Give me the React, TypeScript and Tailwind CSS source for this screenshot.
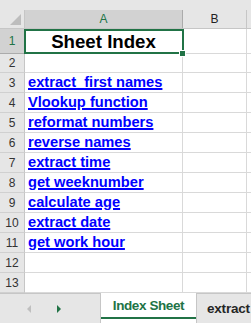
import React from "react";

const rows = [
  { n: 1, h: "h-[25px]" },
  { n: 2, h: "h-[19px]" },
  { n: 3, h: "h-[20px]", link: "extract\u00a0 first names" },
  { n: 4, h: "h-[20px]", link: "Vlookup function" },
  { n: 5, h: "h-[20px]", link: "reformat numbers" },
  { n: 6, h: "h-[20px]", link: "reverse names" },
  { n: 7, h: "h-[20px]", link: "extract time" },
  { n: 8, h: "h-[20px]", link: "get weeknumber" },
  { n: 9, h: "h-[20px]", link: "calculate age" },
  { n: 10, h: "h-[20px]", link: "extract date" },
  { n: 11, h: "h-[20px]", link: "get work hour" },
  { n: 12, h: "h-[20px]" },
  { n: 13, h: "h-[20px]" },
];

export default function App() {
  return (
    <div className="relative w-[251px] h-[323px] overflow-hidden bg-white flex flex-col font-['Liberation_Sans',Arial,sans-serif]">
      <div className="h-[10px] bg-[#e6e6e6] shrink-0" />

      {/* column headers */}
      <div className="flex h-[19px] shrink-0 bg-[#e6e6e6] border-b border-[#c6c6c6]">
        <div className="relative w-[25px] border-r border-[#c6c6c6]">
          <svg className="absolute right-[3px] bottom-[3px]" width="11" height="11" viewBox="0 0 11 11">
            <polygon points="11,0 11,11 0,11" fill="#bdbdbd" />
          </svg>
        </div>
        <div className="w-[158px] flex items-center justify-center bg-[#d2d2d2] border-r border-[#ababab] text-[12px] text-[#217346]">
          A
        </div>
        <div className="w-[64px] flex items-center justify-center border-r border-[#c6c6c6] text-[12px] text-[#222]">
          B
        </div>
        <div className="flex-1" />
      </div>

      {/* grid */}
      {rows.map((r) => (
        <div key={r.n} className={`flex shrink-0 ${r.h}`}>
          <div
            className={`w-[25px] flex items-center justify-center border-r border-b border-r-[#c6c6c6] text-[12px] ${
              r.n === 1
                ? "bg-[#d2d2d2] border-b-[#ababab] text-[#217346]"
                : "bg-[#e6e6e6] border-b-[#d0d0d0] text-[#333]"
            }`}
          >
            {r.n}
          </div>
          <div className="w-[158px] flex items-end border-r border-b border-[#d9d9d9] overflow-visible whitespace-nowrap">
            {r.n === 1 && (
              <div className="w-full text-center text-[18.67px] leading-[22px] font-bold text-black">
                Sheet Index
              </div>
            )}
            {r.link && (
              <a
                href="#"
                className="pl-[3px] pb-[2px] text-[14.67px] leading-[16px] font-bold text-[#0000ff] underline decoration-2 underline-offset-[1px]"
              >
                {r.link}
              </a>
            )}
          </div>
          <div className="w-[64px] border-r border-b border-[#d9d9d9]" />
          <div className="flex-1 border-b border-[#d9d9d9]" />
        </div>
      ))}

      {/* selection on A1 */}
      <div className="absolute left-[24px] top-[29px] w-[160px] h-[25px] border-2 border-[#217346]" />
      <div className="absolute left-[179px] top-[50px] w-[7px] h-[7px] bg-[#217346] border border-white" />

      {/* sheet tabs */}
      <div className="flex h-[30px] shrink-0 bg-[#e6e6e6] border-t border-[#c6c6c6]">
        <div className="w-[100px] flex items-center">
          <svg className="ml-[27px]" width="5" height="8" viewBox="0 0 5 8">
            <polygon points="4,0 4,8 0,4" fill="#bfbfbf" />
          </svg>
          <svg className="ml-[25px]" width="5" height="8" viewBox="0 0 5 8">
            <polygon points="0,0 0,8 4,4" fill="#217346" />
          </svg>
        </div>
        <div className="-mt-px w-[97px] flex flex-col bg-white border-l border-r border-[#c6c6c6]">
          <div className="flex-1 flex items-center justify-center pt-[2px] text-[13.5px] font-bold text-[#217346] tracking-[-0.4px]">
            Index Sheet
          </div>
          <div className="h-[2px] bg-[#217346] mb-[4px]" />
        </div>
        <div className="flex-1 pl-[10px] flex items-center pt-[2px] text-[13.5px] font-bold text-[#262626] tracking-[-0.2px] whitespace-nowrap">
          extract
        </div>
      </div>
    </div>
  );
}
